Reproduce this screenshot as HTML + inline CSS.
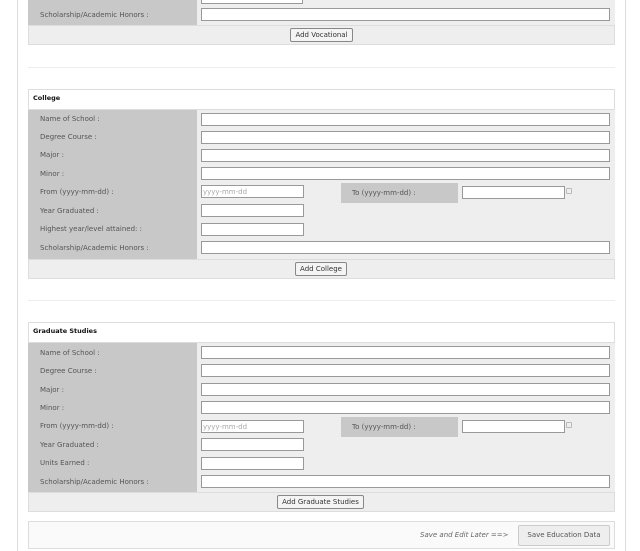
<!DOCTYPE html>
<html><head><meta charset="utf-8"><style>
body{margin:0;width:640px;height:551px;background:#fff;position:relative;overflow:hidden;font-family:"DejaVu Sans","Liberation Sans",sans-serif;font-size:7px;color:#555}
div{position:absolute;box-sizing:border-box}
.outer{left:17px;top:0;width:609px;height:551px;border-left:1px solid #ddd;border-right:1px solid #ddd}
.lab{background:#c8c8c8;left:28px;width:169px}
.inp{background:#eee;left:197px;width:418px}
.in{background:#fff;border:1px solid #999;height:13px}
.t{white-space:nowrap;line-height:10px}
.btn{background:#f4f4f4;border:1px solid #888;border-radius:2px;text-align:center;line-height:13px;color:#333;font-size:7px}
.hdr{left:28px;width:587px;height:21px;background:#fff;border:1px solid #ddd;font-weight:bold;color:#111;font-size:6.5px;padding:4px 0 0 4px}
.bar{left:28px;width:587px;background:#eee;border:1px solid #ddd}
.hr{left:28px;width:587px;height:1px;background:#eee}
.ph{color:#aaa;padding-left:1px;line-height:12px}
</style></head><body>
<div class="outer"></div>

<div class="lab" style="top:0;height:25px"></div>
<div class="inp" style="top:0;height:25px"></div>
<div class="in" style="left:201px;top:0;width:102px;height:4px;border-top:none"></div>
<div class="t" style="left:40px;top:10px">Scholarship/Academic Honors :</div>
<div class="in" style="left:201px;top:8px;width:409px"></div>
<div class="bar" style="top:25px;height:20px"></div>
<div class="btn" style="left:290px;top:28px;width:63px;height:14px">Add Vocational</div>
<div class="hr" style="top:67px"></div>

<div class="hdr" style="top:89px">College</div>
<div class="lab" style="top:110px;height:150px"></div>
<div class="inp" style="top:110px;height:150px"></div>
<div class="t" style="left:40px;top:114px">Name of School :</div><div class="in" style="left:201px;top:113px;width:409px"></div>
<div class="t" style="left:40px;top:132px">Degree Course :</div><div class="in" style="left:201px;top:131px;width:409px"></div>
<div class="t" style="left:40px;top:150px">Major :</div><div class="in" style="left:201px;top:149px;width:409px"></div>
<div class="t" style="left:40px;top:169px">Minor :</div><div class="in" style="left:201px;top:167px;width:409px"></div>
<div class="t" style="left:40px;top:187px">From (yyyy-mm-dd) :</div><div class="in ph" style="left:201px;top:185px;width:103px">yyyy-mm-dd</div>
<div class="lab" style="left:341px;top:183px;width:117px;height:20px"></div>
<div class="t" style="left:352px;top:188px">To (yyyy-mm-dd) :</div>
<div class="in" style="left:462px;top:186px;width:103px"></div>
<div style="left:566px;top:188px;width:6px;height:6px;border:1px solid #bbb;border-radius:1px"></div>
<div class="t" style="left:40px;top:206px">Year Graduated :</div><div class="in" style="left:201px;top:204px;width:103px"></div>
<div class="t" style="left:40px;top:224px">Highest year/level attained: :</div><div class="in" style="left:201px;top:223px;width:103px"></div>
<div class="t" style="left:40px;top:243px">Scholarship/Academic Honors :</div><div class="in" style="left:201px;top:241px;width:409px"></div>
<div class="bar" style="top:259px;height:20px"></div>
<div class="btn" style="left:295px;top:262px;width:52px;height:14px">Add College</div>
<div class="hr" style="top:300px"></div>

<div class="hdr" style="top:322px">Graduate Studies</div>
<div class="lab" style="top:343px;height:150px"></div>
<div class="inp" style="top:343px;height:150px"></div>
<div class="t" style="left:40px;top:348px">Name of School :</div><div class="in" style="left:201px;top:346px;width:409px"></div>
<div class="t" style="left:40px;top:366px">Degree Course :</div><div class="in" style="left:201px;top:364px;width:409px"></div>
<div class="t" style="left:40px;top:385px">Major :</div><div class="in" style="left:201px;top:383px;width:409px"></div>
<div class="t" style="left:40px;top:403px">Minor :</div><div class="in" style="left:201px;top:401px;width:409px"></div>
<div class="t" style="left:40px;top:421px">From (yyyy-mm-dd) :</div><div class="in ph" style="left:201px;top:420px;width:103px">yyyy-mm-dd</div>
<div class="lab" style="left:341px;top:417px;width:117px;height:20px"></div>
<div class="t" style="left:352px;top:422px">To (yyyy-mm-dd) :</div>
<div class="in" style="left:462px;top:420px;width:103px"></div>
<div style="left:566px;top:422px;width:6px;height:6px;border:1px solid #bbb;border-radius:1px"></div>
<div class="t" style="left:40px;top:440px">Year Graduated :</div><div class="in" style="left:201px;top:438px;width:103px"></div>
<div class="t" style="left:40px;top:458px">Units Earned :</div><div class="in" style="left:201px;top:457px;width:103px"></div>
<div class="t" style="left:40px;top:477px">Scholarship/Academic Honors :</div><div class="in" style="left:201px;top:475px;width:409px"></div>
<div class="bar" style="top:492px;height:20px"></div>
<div class="btn" style="left:277px;top:495px;width:87px;height:14px">Add Graduate Studies</div>

<div style="left:28px;top:521px;width:587px;height:28px;background:#fafafa;border:1px solid #ddd"></div>
<div class="t" style="left:420px;top:530px;font-style:italic;color:#666">Save and Edit Later ==&gt;</div>
<div class="btn" style="left:518px;top:525px;width:92px;height:21px;line-height:19px;border-color:#ccc;background:#eee;color:#555">Save Education Data</div>
</body></html>
